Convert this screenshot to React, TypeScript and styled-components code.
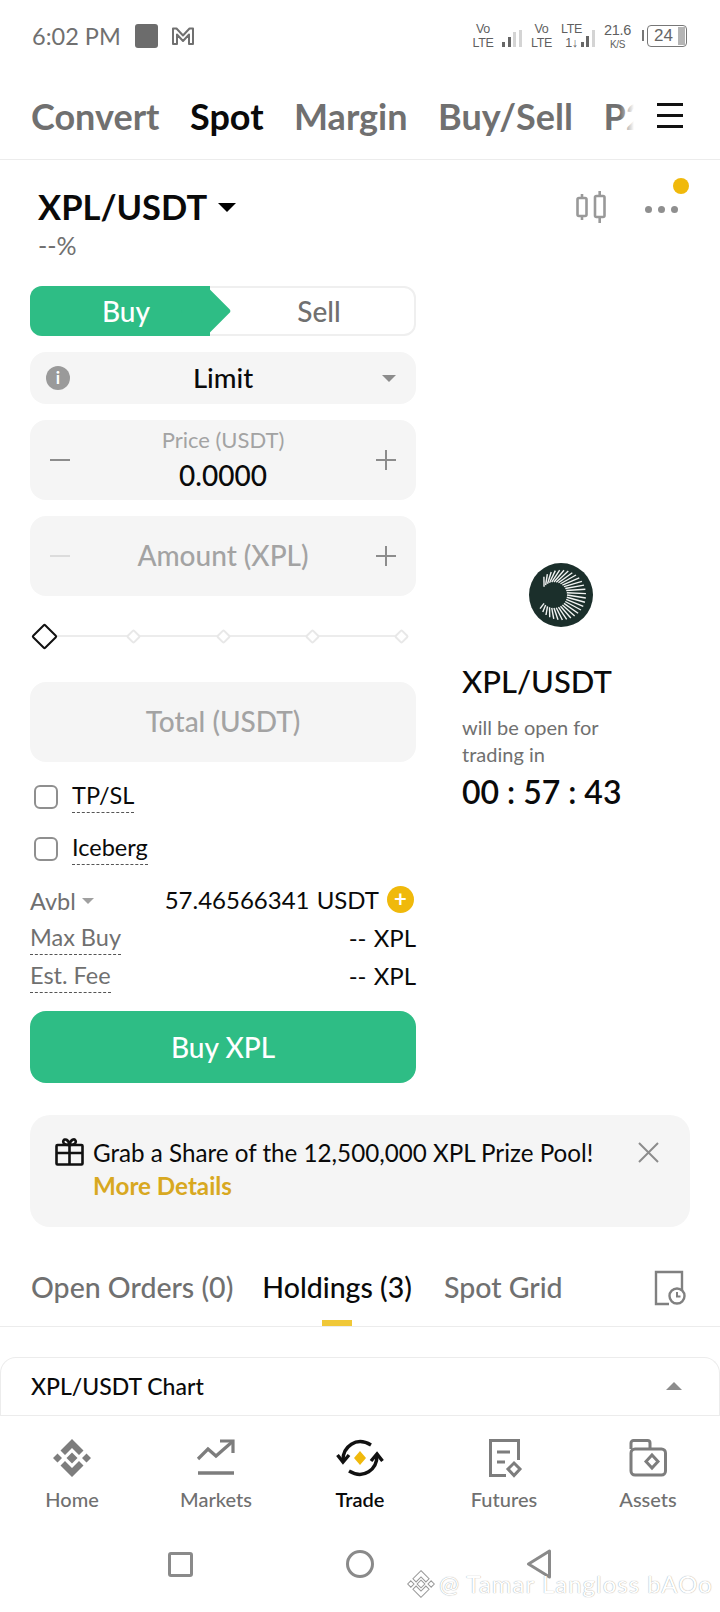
import React from "react";
import styled, { createGlobalStyle } from "styled-components";

const GRAY = "#707070";
const SOFT = "#a3a3a3";
const GREEN = "#2ebd85";
const FIELD = "#f5f5f5";
const YELLOW = "#f0b90b";

const GlobalStyle = createGlobalStyle`
  html, body { margin: 0; padding: 0; background: #fff; }
  * { box-sizing: border-box; }
  body { font-family: Lato, "Liberation Sans", sans-serif; color: #0a0a0a; }
`;

const Page = styled.div`
  position: relative;
  width: 720px;
  height: 1612px;
  display: flex;
  flex-direction: column;
  overflow: hidden;
  background: #fff;
`;

/* status bar */
const StatusBar = styled.div`
  height: 72px;
  flex: none;
  padding: 0 33px 0 32px;
  display: flex;
  align-items: center;
  justify-content: space-between;
`;
const StatusLeft = styled.div`
  display: flex;
  align-items: center;
  color: ${GRAY};
  font-size: 23.5px;
`;
const AppSquare = styled.div`
  width: 23px;
  height: 24px;
  margin-left: 14px;
  border-radius: 3px;
  background: #6c6c6c;
`;
const GmailSvg = styled.svg`
  margin-left: 13px;
`;
const StatusRight = styled.div`
  display: flex;
  align-items: center;
  color: #5f5f5f;
`;
const NetLabel = styled.div<{ $gap?: number }>`
  width: 21px;
  display: flex;
  flex-direction: column;
  align-items: center;
  margin-left: ${(p) => p.$gap ?? 0}px;
  font-family: "Liberation Sans", sans-serif;
  font-size: 12.5px;
  line-height: 14px;
  letter-spacing: -0.3px;
  white-space: nowrap;
`;
const Speed = styled.div`
  display: flex;
  flex-direction: column;
  align-items: center;
  margin-left: 9px;
  font-family: "Liberation Sans", sans-serif;
  font-size: 14.5px;
  line-height: 17px;
  letter-spacing: -0.3px;
  small {
    font-size: 10px;
    line-height: 11px;
  }
`;
const Bars = styled.div<{ $gap?: number }>`
  display: flex;
  align-items: flex-end;
  gap: 2.5px;
  height: 17px;
  margin-top: 5px;
  margin-left: ${(p) => p.$gap ?? 9}px;
`;
const Bar = styled.span<{ $h: number; $on?: boolean }>`
  width: 3px;
  height: ${(p) => p.$h}px;
  background: ${(p) => (p.$on ? "#666" : "#d4d4d4")};
`;
const Battery = styled.div`
  position: relative;
  width: 40px;
  height: 22px;
  margin-left: 16px;
  border: 1.5px solid #777;
  border-radius: 4px;
  font-family: "Liberation Sans", sans-serif;
  font-size: 17px;
  line-height: 19px;
  padding-left: 6px;
  color: #666;
  &::before {
    content: "";
    position: absolute;
    left: -6px;
    top: 4px;
    width: 2px;
    height: 11px;
    background: #777;
  }
  &::after {
    content: "";
    position: absolute;
    right: 1px;
    top: 1px;
    bottom: 1px;
    width: 7px;
    background: #b5b5b5;
  }
`;

/* top tabs */
const TopNav = styled.div`
  height: 88px;
  flex: none;
  display: flex;
  align-items: center;
  justify-content: space-between;
  padding: 0 37px 0 31px;
  border-bottom: 1px solid #ececec;
`;
const TopTabs = styled.div`
  position: relative;
  width: 603px;
  overflow: hidden;
  display: flex;
  gap: 30.5px;
  &::after {
    content: "";
    position: absolute;
    right: 0;
    top: 0;
    bottom: 0;
    width: 14px;
    background: linear-gradient(to right, rgba(255, 255, 255, 0), #fff);
  }
`;
const TopTab = styled.div<{ $active?: boolean }>`
  flex: none;
  font-size: 36px;
  line-height: 44px;
  font-weight: 700;
  color: ${(p) => (p.$active ? "#0a0a0a" : GRAY)};
`;
const Hamburger = styled.div`
  width: 26px;
  height: 25px;
  display: flex;
  flex-direction: column;
  justify-content: space-between;
  span {
    height: 3px;
    background: #111;
  }
`;

/* pair header */
const PairHeader = styled.div`
  flex: none;
  height: 126px;
  padding: 22px 42px 0 38px;
  display: flex;
  justify-content: space-between;
`;
const PairTitle = styled.div`
  display: flex;
  align-items: center;
  gap: 11px;
  font-size: 34.5px;
  line-height: 50px;
  font-weight: 700;
`;
const Caret = styled.span<{ $size?: number; $color?: string; $up?: boolean }>`
  display: inline-block;
  width: 0;
  height: 0;
  border-left: ${(p) => p.$size ?? 9}px solid transparent;
  border-right: ${(p) => p.$size ?? 9}px solid transparent;
  ${(p) => (p.$up ? "border-bottom" : "border-top")}: ${(p) => (p.$size ?? 9) * 1.05}px solid ${(p) => p.$color ?? "#000"};
`;
const PairChange = styled.div`
  font-size: 25px;
  line-height: 27px;
  color: ${GRAY};
`;
const PairTools = styled.div`
  display: flex;
  align-items: flex-start;
  gap: 39px;
  padding-top: 9px;
`;
const MoreButton = styled.div`
  position: relative;
  display: flex;
  gap: 6px;
  margin-top: 15px;
  span {
    width: 7px;
    height: 7px;
    border-radius: 50%;
    background: #8f8f8f;
  }
  &::after {
    content: "";
    position: absolute;
    right: -11px;
    top: -28px;
    width: 16px;
    height: 16px;
    border-radius: 50%;
    background: ${YELLOW};
  }
`;

/* trade area */
const TradeArea = styled.div`
  flex: none;
  display: flex;
  padding: 0 30px;
  gap: 46px;
`;
const FormColumn = styled.div`
  width: 386px;
  flex: none;
`;
const SideToggle = styled.div`
  height: 50px;
  display: flex;
  border: 2px solid #efefef;
  border-radius: 12px;
`;
const BuySide = styled.div`
  position: relative;
  width: 180px;
  margin: -2px 0 -2px -2px;
  background: ${GREEN};
  border-radius: 12px 0 0 12px;
  color: #fff;
  font-size: 28px;
  font-weight: 500;
  display: flex;
  align-items: center;
  justify-content: center;
  padding-left: 12px;
  &::after {
    content: "";
    position: absolute;
    right: -14px;
    top: 7px;
    width: 36px;
    height: 36px;
    background: ${GREEN};
    border-radius: 3px;
    transform: rotate(45deg);
  }
`;
const SellSide = styled.div`
  flex: 1;
  color: ${GRAY};
  font-size: 28px;
  font-weight: 500;
  display: flex;
  align-items: center;
  justify-content: center;
  padding-left: 14px;
`;
const Field = styled.div<{ $h: number; $mt?: number }>`
  height: ${(p) => p.$h}px;
  margin-top: ${(p) => p.$mt ?? 16}px;
  padding: 0 20px;
  background: ${FIELD};
  border-radius: 16px;
  display: flex;
  align-items: center;
  justify-content: space-between;
`;
const FieldCenter = styled.div`
  flex: 1;
  margin-top: -2px;
  text-align: center;
`;
const LimitText = styled(FieldCenter)`
  padding-right: 6px;
  font-size: 27.5px;
  font-weight: 500;
`;
const InfoDot = styled.span`
  width: 24px;
  height: 24px;
  margin-left: -4px;
  border-radius: 50%;
  background: #9a9a9a;
  color: #fff;
  font-size: 17px;
  font-weight: 700;
  line-height: 24px;
  text-align: center;
`;
const SmallLabel = styled.div`
  font-size: 22px;
  line-height: 26px;
  color: ${SOFT};
`;
const ValueText = styled.div`
  margin-top: 5px;
  font-size: 28px;
  line-height: 34px;
  font-weight: 500;
`;
const Placeholder = styled(FieldCenter)`
  font-size: 28px;
  font-weight: 500;
  color: ${SOFT};
`;
const Stepper = styled.span<{ $dim?: boolean }>`
  position: relative;
  flex: none;
  width: 20px;
  height: 20px;
  &::before,
  &::after {
    content: "";
    position: absolute;
    background: ${(p) => (p.$dim ? "#dcdcdc" : "#8c8c8c")};
  }
`;
const Minus = styled(Stepper)`
  &::before {
    left: 0;
    right: 0;
    top: 9px;
    height: 2px;
  }
  &::after {
    display: none;
  }
`;
const Plus = styled(Stepper)`
  &::before {
    left: 0;
    right: 0;
    top: 9px;
    height: 2px;
  }
  &::after {
    top: 0;
    bottom: 0;
    left: 9px;
    width: 2px;
  }
`;
const Slider = styled.div`
  position: relative;
  height: 40px;
  margin: 20px 0 26px;
  display: flex;
  align-items: center;
  justify-content: space-between;
  padding: 0 9px;
  &::before {
    content: "";
    position: absolute;
    left: 12px;
    right: 10px;
    top: 19px;
    height: 2px;
    background: #ececec;
  }
`;
const SliderMark = styled.span<{ $first?: boolean }>`
  position: relative;
  width: ${(p) => (p.$first ? 19 : 11)}px;
  height: ${(p) => (p.$first ? 19 : 11)}px;
  margin: ${(p) => (p.$first ? "0 -4px" : "0")};
  background: #fff;
  border: ${(p) => (p.$first ? "2px solid #111" : "2px solid #e8e8e8")};
  border-radius: 2px;
  transform: rotate(45deg);
`;
const CheckGroup = styled.div`
  padding: 9px 0 7px;
`;
const CheckRow = styled.label`
  height: 52px;
  display: flex;
  align-items: center;
  gap: 14px;
  padding-left: 4px;
  font-size: 23.5px;
`;
const CheckBox = styled.span`
  width: 24px;
  height: 24px;
  border: 2px solid #8f8f8f;
  border-radius: 6px;
`;
const Dotted = styled.span`
  padding-bottom: 3px;
  border-bottom: 1px dashed #555;
  line-height: 28px;
`;
const InfoRow = styled.div`
  height: 38px;
  display: flex;
  align-items: center;
  justify-content: space-between;
  font-size: 24px;
`;
const InfoLabel = styled.span`
  display: flex;
  align-items: center;
  gap: 6px;
  font-size: 23.5px;
  color: ${GRAY};
`;
const InfoValue = styled.span`
  display: flex;
  align-items: center;
  gap: 8px;
  margin-top: -3px;
  word-spacing: 1px;
`;
const AddCoin = styled.span`
  width: 27px;
  height: 27px;
  margin-right: 2px;
  border-radius: 50%;
  background: ${YELLOW};
  color: #fff;
  font-size: 22px;
  font-weight: 700;
  line-height: 26px;
  text-align: center;
`;
const BuyButton = styled.div`
  height: 72px;
  margin-top: 15px;
  border-radius: 16px;
  background: ${GREEN};
  color: #fff;
  font-size: 28px;
  font-weight: 500;
  display: flex;
  align-items: center;
  justify-content: center;
`;
const OpenColumn = styled.div`
  flex: 1;
  padding-top: 277px;
`;
const CoinLogo = styled.div`
  display: flex;
  justify-content: center;
  margin-bottom: 34px;
  width: 198px;
`;
const OpenPair = styled.div`
  font-size: 31px;
  line-height: 40px;
  font-weight: 500;
`;
const OpenText = styled.div`
  margin-top: 13px;
  font-size: 20px;
  line-height: 26.5px;
  color: ${GRAY};
`;
const Countdown = styled.div`
  margin-top: 5px;
  font-size: 32px;
  line-height: 40px;
  font-weight: 600;
`;

/* promo banner */
const Banner = styled.div`
  flex: none;
  height: 112px;
  margin: 32px 30px 0;
  padding: 21px 31px 0 25px;
  border-radius: 20px;
  background: ${FIELD};
  display: flex;
  align-items: flex-start;
`;
const GiftSvg = styled.svg`
  margin-top: 1px;
`;
const BannerBody = styled.div`
  flex: 1;
  margin-left: 9px;
  font-size: 24.2px;
  line-height: 33px;
`;
const BannerLink = styled.div`
  color: #d8a821;
  font-weight: 700;
`;
const CloseSvg = styled.svg`
  margin-top: 6px;
`;

/* orders tabs */
const OrderTabs = styled.div`
  flex: none;
  height: 100px;
  padding: 0 34px 0 31px;
  border-bottom: 1px solid #ececec;
  display: flex;
  align-items: flex-start;
`;
const OrderTab = styled.div<{ $active?: boolean }>`
  position: relative;
  height: 99px;
  margin-right: ${(p) => (p.$active ? 32 : 29)}px;
  padding-top: 42px;
  font-size: 28.5px;
  line-height: 36px;
  font-weight: 500;
  color: ${(p) => (p.$active ? "#0a0a0a" : GRAY)};
  ${(p) =>
    p.$active &&
    `&::after {
      content: "";
      position: absolute;
      left: 50%;
      bottom: 0;
      width: 30px;
      height: 6px;
      margin-left: -15px;
      background: #f0c838;
    }`}
`;
const HistoryIcon = styled.div`
  margin-left: auto;
  padding-top: 43px;
`;

/* collapsed chart card */
const ChartCard = styled.div`
  flex: 1;
  margin-top: 30px;
  padding: 12px 37px 0 30px;
  border: 1px solid #ececec;
  border-bottom: none;
  border-radius: 16px 16px 0 0;
  display: flex;
  justify-content: space-between;
  font-size: 23px;
  line-height: 32px;
  font-weight: 500;
`;
const CardCaret = styled.div`
  padding-top: 11px;
  line-height: 0;
`;

/* bottom navigation */
const BottomNav = styled.div`
  flex: none;
  height: 105px;
  border-top: 1px solid #ececec;
  display: grid;
  grid-template-columns: repeat(5, 144px);
`;
const NavItem = styled.div<{ $active?: boolean }>`
  display: flex;
  flex-direction: column;
  align-items: center;
  padding-top: 22px;
  font-size: 20px;
  line-height: 26px;
  font-weight: ${(p) => (p.$active ? 600 : 500)};
  color: ${(p) => (p.$active ? "#0a0a0a" : GRAY)};
  svg {
    margin-bottom: 8px;
  }
`;
const SystemNav = styled.div`
  flex: none;
  height: 92px;
  padding-bottom: 4px;
  display: grid;
  grid-template-columns: repeat(3, 1fr);
  justify-items: center;
  align-items: center;
`;
const SysSquare = styled.span`
  width: 25px;
  height: 25px;
  border: 3px solid #8a8a8a;
  border-radius: 3px;
  justify-self: end;
  margin-right: 47px;
`;
const SysCircle = styled.span`
  width: 28px;
  height: 28px;
  border: 3px solid #8a8a8a;
  border-radius: 50%;
`;
const SysBack = styled.div`
  justify-self: start;
  margin-left: 46px;
  line-height: 0;
`;
const Watermark = styled.div`
  position: absolute;
  left: 407px;
  bottom: 11px;
  display: flex;
  align-items: center;
  gap: 4px;
  font-size: 24px;
  line-height: 34px;
  letter-spacing: 1px;
  color: #fff;
  text-shadow: 0 0 1px #888;
  white-space: nowrap;
`;

const GmailIcon = () => (
  <GmailSvg width="24" height="20" viewBox="0 0 24 20" fill="none" stroke="#707070" strokeWidth="2">
    <path d="M2 18V2.5h3.5L12 9.5l6.5-7H22V18h-4V8.5L12 15 6 8.5V18z" strokeLinejoin="round" />
  </GmailSvg>
);

const CandleIcon = () => (
  <svg width="30" height="32" viewBox="0 0 30 32" fill="none" stroke="#999" strokeWidth="2.6">
    <rect x="1.5" y="7" width="9" height="18" rx="1.5" />
    <path d="M6 3v4M6 25v4" />
    <rect x="19" y="5" width="9.5" height="21" rx="1.5" />
    <path d="M23.7 0v5M23.7 26v6" />
  </svg>
);

const GiftIcon = () => (
  <GiftSvg width="29" height="29" viewBox="0 0 29 29" fill="none" stroke="#111" strokeWidth="2.6">
    <rect x="1.5" y="8" width="26" height="19.5" rx="1" />
    <path d="M1.5 16h26M14.5 8v19.5" />
    <path d="M14.5 8c-5 0-7-2-6-4.5 1-2 5-1.5 6 4.5zM14.5 8c5 0 7-2 6-4.5-1-2-5-1.5-6 4.5z" />
  </GiftSvg>
);

const CloseIcon = () => (
  <CloseSvg width="21" height="21" viewBox="0 0 21 21" stroke="#8c8c8c" strokeWidth="2">
    <path d="M1 1l19 19M20 1L1 20" />
  </CloseSvg>
);

const ClockDocIcon = () => (
  <svg width="32" height="36" viewBox="0 0 32 36" fill="none" stroke="#808080" strokeWidth="2.4">
    <path d="M15 34H2V2h26v19" />
    <circle cx="23" cy="26" r="7.5" />
    <path d="M23 22v4.5h3.5" strokeWidth="2" />
  </svg>
);

const HomeIcon = () => (
  <svg width="40" height="40" viewBox="0 0 40 40" fill="#7d7d7d">
    <path d="M20 1l11.5 11.5-4.5 4.5-7-7-7 7-4.5-4.5z" />
    <path d="M20 39L8.5 27.5l4.5-4.5 7 7 7-7 4.5 4.5z" />
    <path d="M20 14.5l5.5 5.5-5.5 5.5-5.5-5.5z" />
    <path d="M5.5 15.5l4.5 4.5-4.5 4.5L1 20zM34.5 15.5l4.5 4.5-4.5 4.5L30 20z" />
  </svg>
);

const MarketsIcon = () => (
  <svg width="40" height="40" viewBox="0 0 40 40" fill="none" stroke="#7d7d7d" strokeWidth="3.2">
    <path d="M2 21l10-10 8 7L36 4" />
    <path d="M24 3h13v12" />
    <path d="M2 35h36" strokeWidth="3.6" />
  </svg>
);

const TradeIcon = () => (
  <svg width="48" height="40" viewBox="0 0 48 40" fill="none" stroke="#111" strokeWidth="3.4">
    <path d="M7 22C7 9 20 -2 35 7" />
    <path d="M41 18c0 13-13 24-28 15" />
    <path d="M1.5 17L7 24l6-7" />
    <path d="M35 23l6-7 5.5 7" />
    <path d="M24 13l6 7-6 7-6-7z" fill={YELLOW} stroke="none" />
  </svg>
);

const FuturesIcon = () => (
  <svg width="40" height="40" viewBox="0 0 40 40" fill="none" stroke="#7d7d7d" strokeWidth="3">
    <path d="M22 37.5H6.5V2.5h28V22" />
    <path d="M13 14h13M13 24h8" strokeWidth="3.2" />
    <path d="M30 25l6 6-6 6.5-6-6.5z" />
  </svg>
);

const AssetsIcon = () => (
  <svg width="40" height="40" viewBox="0 0 40 40" fill="none" stroke="#7d7d7d" strokeWidth="3">
    <path d="M3 11V5a2.5 2.5 0 0 1 2.5-2.5h14A2.5 2.5 0 0 1 22 5v6" />
    <rect x="3" y="11" width="34.5" height="26" rx="4" />
    <path d="M24 17l6 6.5-6 6.5-6-6.5z" />
  </svg>
);

const BackIcon = () => (
  <svg width="26" height="30" viewBox="0 0 26 30" fill="none" stroke="#8a8a8a" strokeWidth="3" strokeLinejoin="round">
    <path d="M23.5 2v26L2.5 15z" />
  </svg>
);

const WatermarkLogo = () => (
  <svg width="28" height="32" viewBox="0 0 40 40" fill="#fff" stroke="#999" strokeWidth="1.5">
    <path d="M20 1l11.5 11.5-4.5 4.5-7-7-7 7-4.5-4.5z" />
    <path d="M20 39L8.5 27.5l4.5-4.5 7 7 7-7 4.5 4.5z" />
    <path d="M20 14.5l5.5 5.5-5.5 5.5-5.5-5.5z" />
    <path d="M5.5 15.5l4.5 4.5-4.5 4.5L1 20zM34.5 15.5l4.5 4.5-4.5 4.5L30 20z" />
  </svg>
);

// fan of rays around the dark core, open on the left side
const rays = Array.from({ length: 29 }, (_, i) => -140 + i * 10);

const PlasmaLogo = () => (
  <svg width="64" height="64" viewBox="0 0 64 64">
    <circle cx="32" cy="32" r="32" fill="#1b2f2b" />
    {rays.map((deg) => {
      const a = (deg * Math.PI) / 180;
      const fromX = 25 + 13 * Math.cos(a);
      const fromY = 32 + 13 * Math.sin(a);
      const toX = 32 + 25 * Math.cos(a + 0.12);
      const toY = 32 + 25 * Math.sin(a + 0.12);
      return <line key={deg} x1={fromX} y1={fromY} x2={toX} y2={toY} stroke="#f2f4f3" strokeWidth="1.4" />;
    })}
  </svg>
);

const App = () => {
  return (
    <Page>
      <GlobalStyle />
      <StatusBar>
        <StatusLeft>
          6:02 PM
          <AppSquare />
          <GmailIcon />
        </StatusLeft>
        <StatusRight>
          <NetLabel>
            <span>Vo</span>
            <span>LTE</span>
          </NetLabel>
          <Bars>
            <Bar $h={5} $on />
            <Bar $h={10} $on />
            <Bar $h={15} />
            <Bar $h={17} />
          </Bars>
          <NetLabel $gap={9}>
            <span>Vo</span>
            <span>LTE</span>
          </NetLabel>
          <NetLabel $gap={9}>
            <span>LTE</span>
            <span>1↓</span>
          </NetLabel>
          <Bars $gap={-1}>
            <Bar $h={5} $on />
            <Bar $h={11} $on />
            <Bar $h={17} />
          </Bars>
          <Speed>
            <span>21.6</span>
            <small>K/S</small>
          </Speed>
          <Battery>24</Battery>
        </StatusRight>
      </StatusBar>

      <TopNav>
        <TopTabs>
          <TopTab>Convert</TopTab>
          <TopTab $active>Spot</TopTab>
          <TopTab>Margin</TopTab>
          <TopTab>Buy/Sell</TopTab>
          <TopTab>P2P</TopTab>
        </TopTabs>
        <Hamburger>
          <span />
          <span />
          <span />
        </Hamburger>
      </TopNav>

      <PairHeader>
        <div>
          <PairTitle>
            XPL/USDT
            <Caret $size={9} />
          </PairTitle>
          <PairChange>--%</PairChange>
        </div>
        <PairTools>
          <CandleIcon />
          <MoreButton>
            <span />
            <span />
            <span />
          </MoreButton>
        </PairTools>
      </PairHeader>

      <TradeArea>
        <FormColumn>
          <SideToggle>
            <BuySide>Buy</BuySide>
            <SellSide>Sell</SellSide>
          </SideToggle>
          <Field $h={52}>
            <InfoDot>i</InfoDot>
            <LimitText>Limit</LimitText>
            <Caret $size={7} $color="#8c8c8c" />
          </Field>
          <Field $h={80}>
            <Minus />
            <FieldCenter>
              <SmallLabel>Price (USDT)</SmallLabel>
              <ValueText>0.0000</ValueText>
            </FieldCenter>
            <Plus />
          </Field>
          <Field $h={80}>
            <Minus $dim />
            <Placeholder>Amount (XPL)</Placeholder>
            <Plus />
          </Field>
          <Slider>
            <SliderMark $first />
            <SliderMark />
            <SliderMark />
            <SliderMark />
            <SliderMark />
          </Slider>
          <Field $h={80} $mt={0}>
            <Placeholder>Total (USDT)</Placeholder>
          </Field>
          <CheckGroup>
            <CheckRow>
              <CheckBox />
              <Dotted>TP/SL</Dotted>
            </CheckRow>
            <CheckRow>
              <CheckBox />
              <Dotted>Iceberg</Dotted>
            </CheckRow>
          </CheckGroup>
          <InfoRow>
            <InfoLabel>
              Avbl
              <Caret $size={6} $color="#a0a0a0" />
            </InfoLabel>
            <InfoValue>
              57.46566341 USDT
              <AddCoin>+</AddCoin>
            </InfoValue>
          </InfoRow>
          <InfoRow>
            <InfoLabel>
              <Dotted>Max Buy</Dotted>
            </InfoLabel>
            <InfoValue>-- XPL</InfoValue>
          </InfoRow>
          <InfoRow>
            <InfoLabel>
              <Dotted>Est. Fee</Dotted>
            </InfoLabel>
            <InfoValue>-- XPL</InfoValue>
          </InfoRow>
          <BuyButton>Buy XPL</BuyButton>
        </FormColumn>
        <OpenColumn>
          <CoinLogo>
            <PlasmaLogo />
          </CoinLogo>
          <OpenPair>XPL/USDT</OpenPair>
          <OpenText>
            will be open for
            <br />
            trading in
          </OpenText>
          <Countdown>00 : 57 : 43</Countdown>
        </OpenColumn>
      </TradeArea>

      <Banner>
        <GiftIcon />
        <BannerBody>
          Grab a Share of the 12,500,000 XPL Prize Pool!
          <BannerLink>More Details</BannerLink>
        </BannerBody>
        <CloseIcon />
      </Banner>

      <OrderTabs>
        <OrderTab>Open Orders (0)</OrderTab>
        <OrderTab $active>Holdings (3)</OrderTab>
        <OrderTab>Spot Grid</OrderTab>
        <HistoryIcon>
          <ClockDocIcon />
        </HistoryIcon>
      </OrderTabs>

      <ChartCard>
        XPL/USDT Chart
        <CardCaret>
          <Caret $size={8} $color="#8c8c8c" $up />
        </CardCaret>
      </ChartCard>

      <BottomNav>
        <NavItem>
          <HomeIcon />
          Home
        </NavItem>
        <NavItem>
          <MarketsIcon />
          Markets
        </NavItem>
        <NavItem $active>
          <TradeIcon />
          Trade
        </NavItem>
        <NavItem>
          <FuturesIcon />
          Futures
        </NavItem>
        <NavItem>
          <AssetsIcon />
          Assets
        </NavItem>
      </BottomNav>
      <SystemNav>
        <SysSquare />
        <SysCircle />
        <SysBack>
          <BackIcon />
        </SysBack>
      </SystemNav>
      <Watermark>
        <WatermarkLogo />
        @ Tamar Langloss bAOo
      </Watermark>
    </Page>
  );
};

export default App;
